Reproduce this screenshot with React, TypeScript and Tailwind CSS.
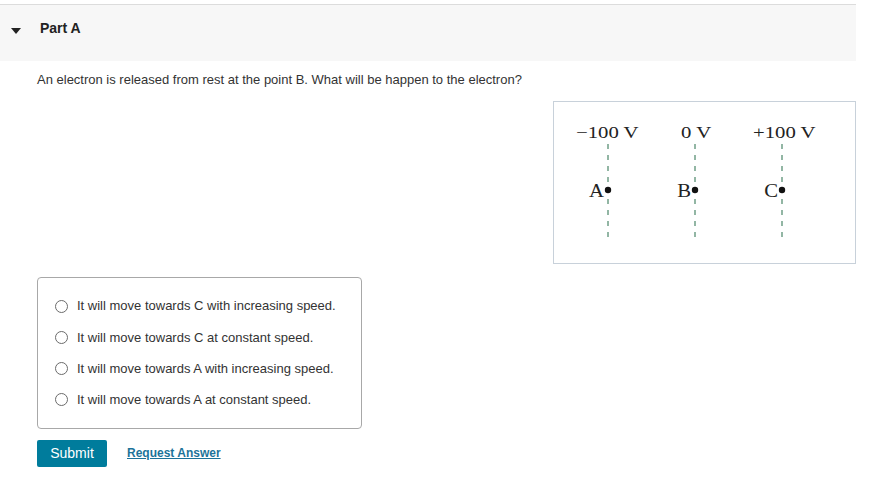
import React from "react";

const options = [
  "It will move towards C with increasing speed.",
  "It will move towards C at constant speed.",
  "It will move towards A with increasing speed.",
  "It will move towards A at constant speed.",
];

function Diagram() {
  const cols = [
    { x: 54, label: "\u2212100 V", lx: 22, pt: "A" },
    { x: 141, label: "0 V", lx: 127, pt: "B" },
    { x: 228, label: "+100 V", lx: 199, pt: "C" },
  ];
  return (
    <svg width="301" height="161" viewBox="0 0 301 161">
      {cols.map((c) => (
        <g key={c.pt}>
          <text
            transform={`translate(${c.lx} 36) scale(1.22 1)`}
            fontFamily="'Liberation Serif', serif"
            fontSize="17"
            fill="#222"
          >
            {c.label}
          </text>
          <line
            x1={c.x}
            y1={42}
            x2={c.x}
            y2={137}
            stroke="#6f9f86"
            strokeWidth="1.5"
            strokeDasharray="5 6"
          />
          <circle cx={c.x} cy={88} r={3.2} fill="#111" />
          <text
            transform={`translate(${c.x - 4} 95) scale(1.15 1)`}
            textAnchor="end"
            fontFamily="'Liberation Serif', serif"
            fontSize="18"
            fill="#222"
          >
            {c.pt}
          </text>
        </g>
      ))}
    </svg>
  );
}

export default function App() {
  return (
    <div
      className="w-[872px] h-[488px] bg-white text-[#333]"
      style={{ fontFamily: "'Liberation Sans', Arial, sans-serif" }}
    >
      <div className="pt-[4px] w-[856px]">
        <div className="h-[57px] bg-[#f7f7f7] border-t border-[#dcdcdc] flex items-center">
          <svg width="10" height="6" viewBox="0 0 10 6" className="ml-[11px] mt-[-5px]">
            <polygon points="0,0 10,0 5,6" fill="#222" />
          </svg>
          <span className="ml-[19px] mt-[-9px] text-[14px] font-bold text-[#222]">Part A</span>
        </div>
        <div className="pl-[37px]">
          <p className="mt-[11px] text-[13px] leading-[16px]">
            An electron is released from rest at the point B. What will be happen to the electron?
          </p>
          <div className="flex justify-end mt-[13px]">
            <div className="w-[303px] h-[163px] border border-[#c8d1da] bg-white">
              <Diagram />
            </div>
          </div>
          <div className="mt-[13px] w-[325px] h-[152px] border border-[#a8a8a8] rounded-[4px] pt-[20px] pl-[17px] flex flex-col gap-[15.3px]">
            {options.map((o) => (
              <label key={o} className="flex items-center h-[16px]">
                <span className="w-[13px] h-[13px] rounded-full border border-[#6b6b6b] bg-white" />
                <span className="ml-[9px] text-[13px] text-[#333]">{o}</span>
              </label>
            ))}
          </div>
          <div className="mt-[11px] flex items-center">
            <button className="w-[70px] h-[27px] bg-[#007c9c] rounded-[2px] text-white text-[14px]">
              Submit
            </button>
            <a className="ml-[20px] mt-[-2px] text-[12px] font-bold text-[#1c7399] underline">
              Request Answer
            </a>
          </div>
        </div>
      </div>
    </div>
  );
}
